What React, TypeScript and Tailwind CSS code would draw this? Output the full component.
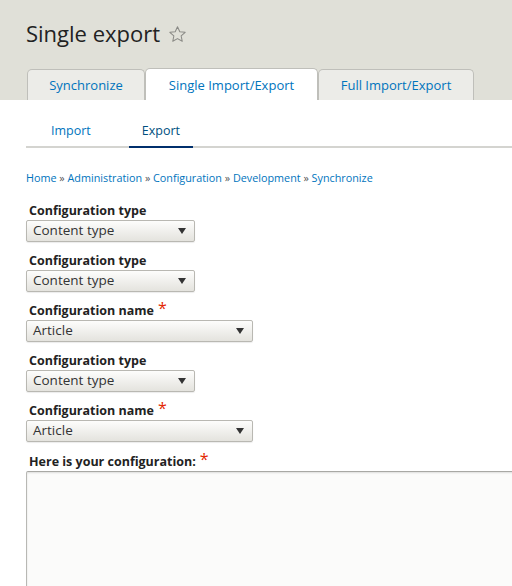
import type { ReactNode } from "react";

const font = { fontFamily: '"Open Sans", "Noto Sans", "DejaVu Sans", sans-serif' };

function Star() {
  return (
    <svg width="19" height="19" viewBox="0 0 24 24" className="ml-[8px] mt-[2px]">
      <path
        d="M12 2.2l2.9 6.3 6.8.7-5.1 4.6 1.4 6.8L12 17.2l-6 3.4 1.4-6.8-5.1-4.6 6.8-.7z"
        fill="none"
        stroke="#8a8a86"
        strokeWidth="1.3"
        strokeLinejoin="round"
      />
    </svg>
  );
}

function Label({ children, required }: { children: ReactNode; required?: boolean }) {
  return (
    <div className="h-[18px] pl-[3px] text-[12.5px] font-bold leading-[18px] text-[#222]">
      {children}
      {required && <span className="ml-[4px] align-top text-[16px] leading-[13px] font-normal text-[#e32700]">*</span>}
    </div>
  );
}

function Select({ value, wide }: { value: string; wide?: boolean }) {
  return (
    <div
      className={`flex h-[22px] items-center justify-between rounded-[2px] border border-[#b9b8b2] bg-gradient-to-b from-[#fdfdfc] to-[#e4e3de] pl-[6px] pr-[8px] shadow-[0_1px_1px_rgba(0,0,0,0.08)] ${
        wide ? "w-[227px]" : "w-[169px]"
      }`}
    >
      <span className="text-[13.5px] leading-none text-[#333]">{value}</span>
      <svg width="8" height="6" viewBox="0 0 8 6">
        <path d="M0 0h8L4 6z" fill="#333" />
      </svg>
    </div>
  );
}

function Field({ label, value, required, wide }: { label: string; value: string; required?: boolean; wide?: boolean }) {
  return (
    <div className="mb-[10px]">
      <Label required={required}>{label}</Label>
      <Select value={value} wide={wide} />
    </div>
  );
}

export default function App() {
  const crumbs = ["Home", "Administration", "Configuration", "Development", "Synchronize"];

  return (
    <div className="h-[586px] w-full overflow-hidden bg-white" style={font}>
      <div className="bg-[#e0e0d8] pl-[26px] pt-[18px]">
        <div className="flex items-center">
          <h1 className="text-[22px] font-medium leading-[30px] text-[#222]">Single export</h1>
          <Star />
        </div>
        <div className="mt-[20px] flex items-end pl-[1px]">
          <a className="flex h-[31px] w-[118px] items-center justify-center rounded-t-[5px] border border-b-0 border-[#bfbfba] bg-[#ecece8] pt-[1px] text-[13px] text-[#0074bd]">
            Synchronize
          </a>
          <a className="flex h-[32px] w-[173px] items-center justify-center rounded-t-[5px] border border-b-0 border-[#bfbfba] bg-white pt-[2px] text-[13px] text-[#0074bd]">
            Single Import/Export
          </a>
          <a className="flex h-[31px] w-[156px] items-center justify-center rounded-t-[5px] border border-b-0 border-[#bfbfba] bg-[#ecece8] pt-[1px] text-[13px] text-[#0074bd]">
            Full Import/Export
          </a>
        </div>
      </div>

      <div className="pl-[26px]">
        <div className="mt-[16px] flex border-b-2 border-[#d4d4d0]">
          <a className="ml-[12px] px-[13px] py-[6px] text-[12.5px] leading-[18px] text-[#0074bd]">Import</a>
          <a className="-mb-[2px] ml-[25px] border-b-2 border-[#002f6c] px-[13px] py-[6px] text-[12.5px] leading-[18px] text-[#004f80]">
            Export
          </a>
        </div>

        <div className="mt-[22px] text-[10.8px] leading-[16px] text-[#0074bd]">
          {crumbs.map((c, i) => (
            <span key={c}>
              {i > 0 && <span className="text-[#555]"> » </span>}
              <a>{c}</a>
            </span>
          ))}
        </div>

        <div className="mt-[16px]">
          <Field label="Configuration type" value="Content type" />
          <Field label="Configuration type" value="Content type" />
          <Field label="Configuration name" value="Article" required wide />
          <Field label="Configuration type" value="Content type" />
          <Field label="Configuration name" value="Article" required wide />
          <div className="pt-[1px]">
            <Label required>Here is your configuration:</Label>
          </div>
          <div className="h-[200px] w-[600px] rounded-[2px] border border-[#b8b8b4] border-t-[#a8a8a4] bg-[#fbfbfa] shadow-[inset_0_1px_2px_rgba(0,0,0,0.12)]" />
        </div>
      </div>
    </div>
  );
}
